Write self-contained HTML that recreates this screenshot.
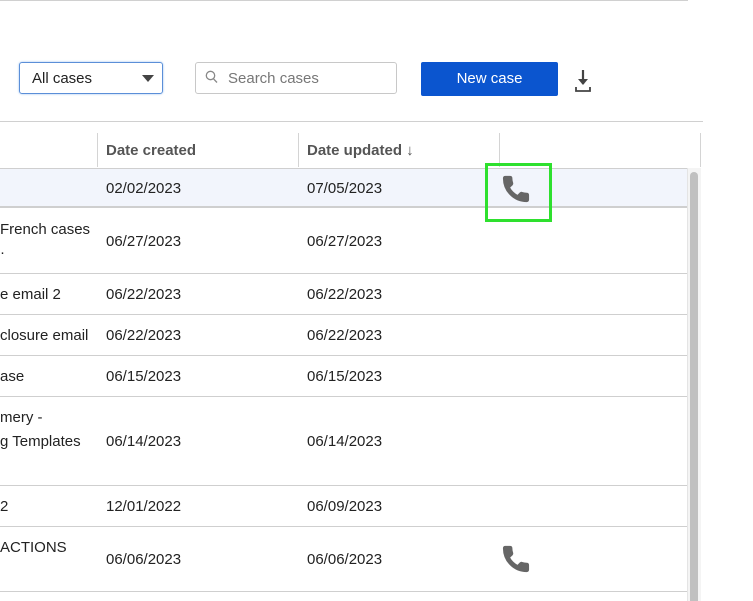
<!DOCTYPE html>
<html><head><style>
body{margin:0;width:753px;height:601px;overflow:hidden;background:#fff;font-family:"Liberation Sans",sans-serif;color:#222;position:relative}
.a{position:absolute}
.t{position:absolute;font-size:15px;color:#222;line-height:23px;white-space:nowrap}
.h{position:absolute;height:1px;background:#cfcfcf;left:0;width:687px}
.v{position:absolute;width:1px;background:#d4d4d4;top:133px;height:34px}
</style></head><body>
<div class="a" style="left:0;top:0;width:688px;height:1px;background:#d0d0d0"></div>
<div class="a" style="left:19px;top:62px;width:142px;height:30px;border:1px solid #5b8fd8;border-radius:3px;box-shadow:0 0 2px #9bc0f0"></div>
<div class="t" style="left:32px;top:67px">All cases</div>
<div class="a" style="left:142px;top:75px;width:0;height:0;border-left:6px solid transparent;border-right:6px solid transparent;border-top:7px solid #444"></div>
<div class="a" style="left:195px;top:62px;width:200px;height:30px;border:1px solid #c8c8c8;border-radius:3px"></div>
<svg class="a" style="left:205px;top:70px" width="13" height="14" viewBox="0 0 13 14"><circle cx="5.5" cy="5.5" r="4.2" fill="none" stroke="#888" stroke-width="1.3"/><line x1="8.5" y1="8.8" x2="12" y2="12.5" stroke="#888" stroke-width="1.3"/></svg>
<div class="t" style="left:228px;top:67px;color:#777">Search cases</div>
<div class="a" style="left:421px;top:62px;width:137px;height:34px;background:#0b55cf;border-radius:2px;color:#fff;font-size:15px;line-height:34px;text-align:center">New case</div>
<svg class="a" style="left:574px;top:68px" width="18" height="26" viewBox="0 0 18 26"><line x1="9" y1="2" x2="9" y2="16" stroke="#444" stroke-width="2.2"/><path d="M4 11 L9 17 L14 11Z" fill="#444"/><path d="M2 19 V23 H16 V19" fill="none" stroke="#444" stroke-width="1.8"/></svg>
<div class="a" style="left:0;top:121px;width:703px;height:1px;background:#d0d0d0"></div>
<div class="v" style="left:97px"></div><div class="v" style="left:298px"></div><div class="v" style="left:499px"></div><div class="v" style="left:700px"></div>
<div class="t" style="left:106px;top:139px;font-weight:bold;color:#555">Date created</div>
<div class="t" style="left:307px;top:139px;font-weight:bold;color:#555">Date updated ↓</div>
<div class="a" style="left:0;top:168px;width:687px;height:40px;background:#f2f5fc;border-top:1px solid #cfcfcf;border-bottom:2px solid #cfcfcf;box-sizing:border-box"></div>
<div class="t" style="left:106px;top:177px">02/02/2023</div><div class="t" style="left:307px;top:177px">07/05/2023</div>
<div class="a" style="left:485px;top:163px;width:67px;height:59px;border:3px solid #2ee02e;box-sizing:border-box"></div>
<svg class="a" style="left:500px;top:173px" width="32" height="32" viewBox="0 0 24 24"><path fill="#666" stroke="#666" stroke-width="1.6" stroke-linejoin="round" d="M6.6 10.8c1.4 2.8 3.8 5.1 6.6 6.6l2.2-2.2c.3-.3.7-.4 1-.2 1.1.4 2.3.6 3.6.6.6 0 1 .4 1 1V20c0 .6-.4 1-1 1C10.6 21 3 13.4 3 4c0-.6.4-1 1-1h3.5c.6 0 1 .4 1 1 0 1.3.2 2.5.6 3.6.1.3 0 .7-.2 1z"/></svg>
<div class="t" style="left:0;top:218px">French cases</div><div class="t" style="left:0;top:241px">·</div>
<div class="t" style="left:106px;top:230px">06/27/2023</div><div class="t" style="left:307px;top:230px">06/27/2023</div>
<div class="h" style="top:273px"></div>
<div class="t" style="left:0;top:283px">e email 2</div><div class="t" style="left:106px;top:283px">06/22/2023</div><div class="t" style="left:307px;top:283px">06/22/2023</div>
<div class="h" style="top:314px"></div>
<div class="t" style="left:0;top:324px">closure email</div><div class="t" style="left:106px;top:324px">06/22/2023</div><div class="t" style="left:307px;top:324px">06/22/2023</div>
<div class="h" style="top:355px"></div>
<div class="t" style="left:0;top:365px">ase</div><div class="t" style="left:106px;top:365px">06/15/2023</div><div class="t" style="left:307px;top:365px">06/15/2023</div>
<div class="h" style="top:396px"></div>
<div class="t" style="left:0;top:406px">mery -</div><div class="t" style="left:0;top:430px">g Templates</div>
<div class="t" style="left:106px;top:430px">06/14/2023</div><div class="t" style="left:307px;top:430px">06/14/2023</div>
<div class="h" style="top:485px"></div>
<div class="t" style="left:0;top:495px">2</div><div class="t" style="left:106px;top:495px">12/01/2022</div><div class="t" style="left:307px;top:495px">06/09/2023</div>
<div class="h" style="top:526px"></div>
<div class="t" style="left:0;top:536px">ACTIONS</div><div class="t" style="left:106px;top:548px">06/06/2023</div><div class="t" style="left:307px;top:548px">06/06/2023</div>
<svg class="a" style="left:500px;top:543px" width="32" height="32" viewBox="0 0 24 24"><path fill="#666" stroke="#666" stroke-width="1.6" stroke-linejoin="round" d="M6.6 10.8c1.4 2.8 3.8 5.1 6.6 6.6l2.2-2.2c.3-.3.7-.4 1-.2 1.1.4 2.3.6 3.6.6.6 0 1 .4 1 1V20c0 .6-.4 1-1 1C10.6 21 3 13.4 3 4c0-.6.4-1 1-1h3.5c.6 0 1 .4 1 1 0 1.3.2 2.5.6 3.6.1.3 0 .7-.2 1z"/></svg>
<div class="h" style="top:591px"></div>
<div class="a" style="left:687px;top:168px;width:13px;height:433px;background:#f4f4f4;border-left:1px solid #e4e4e4"></div>
<div class="a" style="left:690px;top:172px;width:8px;height:429px;background:#c0c0c0;border-radius:4px 4px 0 0"></div>
</body></html>
